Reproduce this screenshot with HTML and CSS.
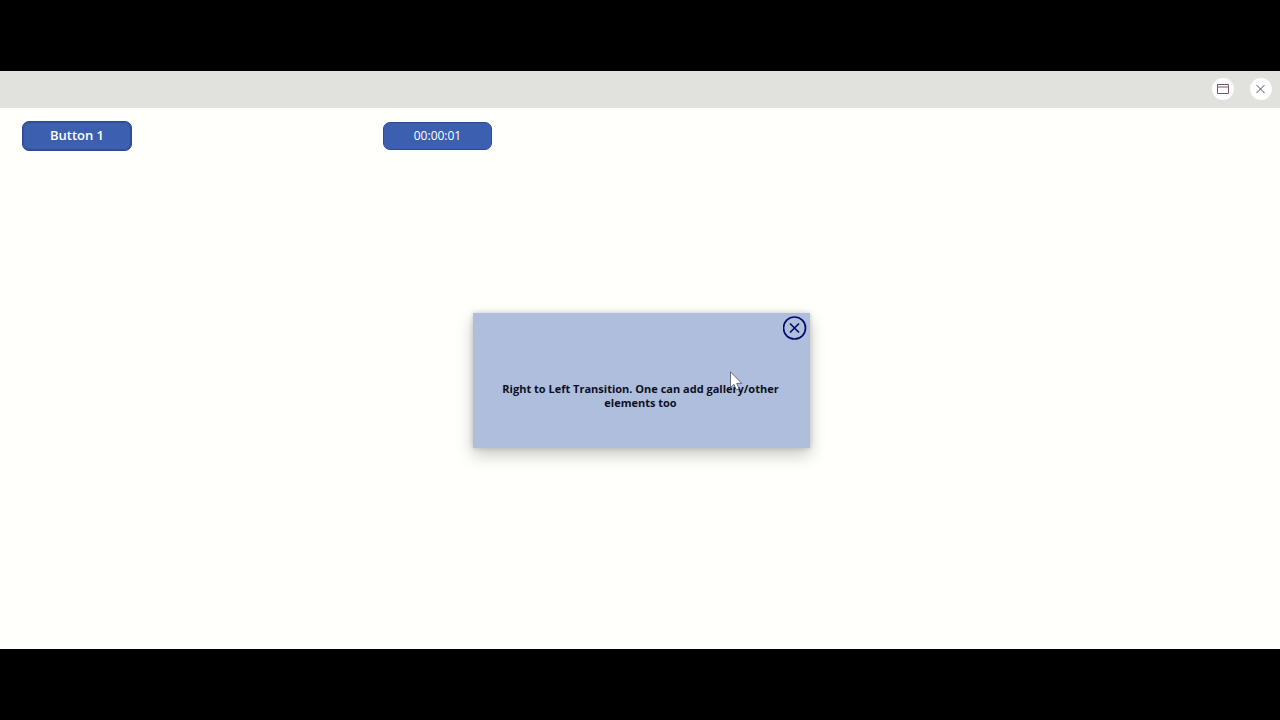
FILE: index.html
```html
<!DOCTYPE html>
<html lang="en">
<head>
<meta charset="utf-8">
<meta name="viewport" content="width=device-width, initial-scale=1">
<title>Transition</title>
<link rel="stylesheet" href="styles.css">
</head>
<body>
<div class="app">
  <header class="titlebar">
    <button class="window-button" type="button" aria-label="Restore window">
      <svg width="12" height="10" viewBox="0 0 12 10" fill="none" stroke="#75566a"><path d="M.5 .5h11v9H.5zM.5 3h11"/></svg>
    </button>
    <button class="window-button" type="button" aria-label="Close window">
      <svg width="10" height="10" viewBox="0 0 10 10" fill="none" stroke="#554c50"><path d="M.5 1l8 8M8.5 1l-8 8"/></svg>
    </button>
  </header>
  <main class="screen">
    <div class="controls">
      <button class="action" type="button">Button 1</button>
      <button class="action timer" type="button">00:00:01</button>
    </div>
    <div class="stage">
      <section class="popup" role="dialog" aria-labelledby="popup-text">
        <button class="popup-close" type="button" aria-label="Close popup">
          <svg width="24" height="24" viewBox="0 0 24 24" fill="none" stroke="#080c66" stroke-width="1.7"><circle cx="11.5" cy="12" r="11"/><path d="M7 7.5l9 9M16 7.5l-9 9"/></svg>
        </button>
        <p class="popup-text" id="popup-text">Right to Left Transition. One can add gallery/other elements too</p>
        <svg class="cursor" width="13" height="20" viewBox="0 0 13 20" aria-hidden="true"><path d="M.5 .8v15.7l3.5-3.2 2.4 5.5 2.6-1.1-2.3-5.3h5z" fill="#fff" stroke="#49516f" stroke-width=".8"/></svg>
      </section>
    </div>
  </main>
</div>
</body>
</html>
```
FILE: styles.css
```css
* {
  box-sizing: border-box;
}

body {
  margin: 0;
  background: #000;
  font-family: "Open Sans", "Noto Sans", sans-serif;
}

button {
  padding: 0;
  font: inherit;
}

.app {
  display: flex;
  flex-direction: column;
  min-height: 100vh;
  padding: 71px 0;
}

.titlebar {
  display: flex;
  justify-content: flex-end;
  align-items: center;
  gap: 16px;
  min-height: 37px;
  padding: 0 8px 1px;
  background: #e1e1de;
}

.window-button {
  display: grid;
  place-items: center;
  width: 22px;
  height: 22px;
  border: 0;
  border-radius: 50%;
  background: #fff;
}

.screen {
  display: flex;
  flex: 1;
  flex-direction: column;
  background: #fffffc;
}

.controls {
  display: flex;
  align-items: center;
  gap: 251px;
  padding: 13px 22px 0;
}

.action {
  width: 110px;
  height: 30px;
  padding-bottom: 2px;
  border: 1px solid #2c4c91;
  border-radius: 7px;
  background: #3c5fb0;
  box-shadow: inset 0 0 1px 1px #2f5099;
  color: #fff;
  font-size: 13px;
  font-weight: 600;
  line-height: 16px;
}

.timer {
  width: 109px;
  height: 28px;
  padding-bottom: 0;
  box-shadow: none;
  font-size: 12px;
  font-weight: 400;
}

.stage {
  display: grid;
  flex: 1;
  justify-items: center;
  align-items: start;
  padding: 162px 0 24px 3px;
}

.popup {
  position: relative;
  display: flex;
  flex-direction: column;
  width: 337px;
  min-height: 135px;
  padding: 3px;
  background: #b0bedd;
  box-shadow: 0 7px 16px rgb(0 0 0 / 22%), 0 0 5px rgb(0 0 0 / 18%);
}

.popup-close {
  align-self: flex-end;
  width: 24px;
  height: 24px;
  border: 0;
  background: none;
}

.popup-close svg {
  display: block;
}

.popup-text {
  margin: 42px 16px 0 14px;
  color: #0c1022;
  font-size: 11px;
  font-weight: 700;
  line-height: 14px;
  text-align: center;
}

.cursor {
  position: absolute;
  top: 58px;
  left: 257px;
}
```
